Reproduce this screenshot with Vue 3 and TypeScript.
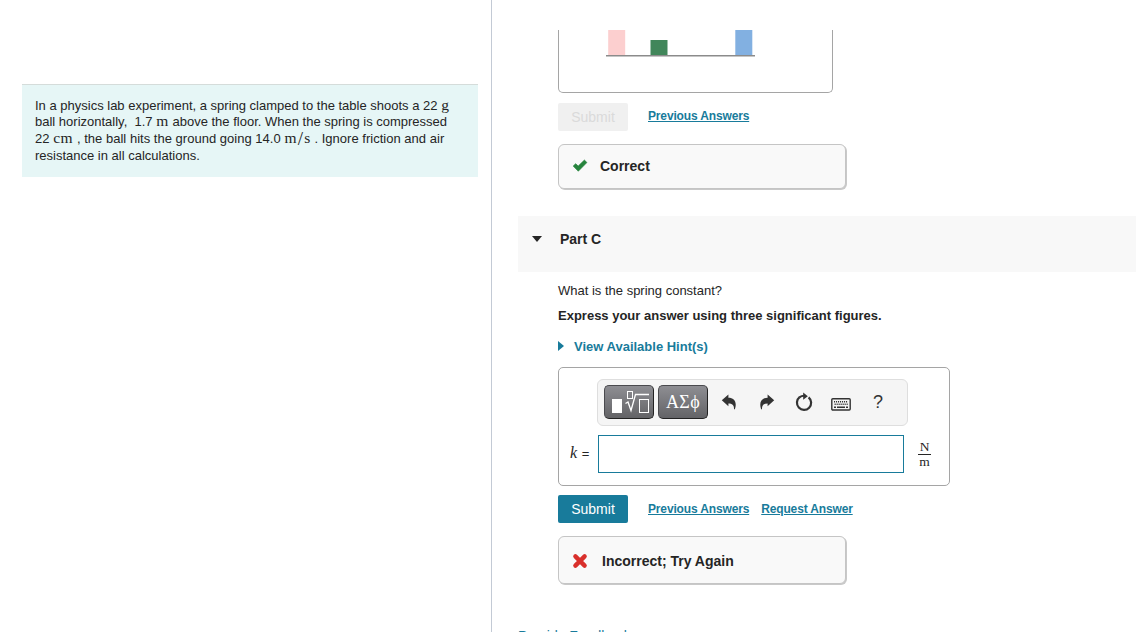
<script setup lang="ts">
import { ref } from 'vue'

const answer = ref('')
const partOpen = ref(true)

// Energy bars, only the lower part is visible in the scrolled panel
const bars = [
  { x: 49.2, height: 26, color: '#fccfcf' },
  { x: 91.5, height: 16, color: '#41865a' },
  { x: 176.3, height: 26, color: '#82b0e1' },
]

// Keys of the on-screen keyboard icon
const keys = [4, 6, 8, 10, 12, 14, 16]

function resetAnswer() {
  answer.value = ''
}
</script>

<template>
  <div class="page">
    <aside class="left">
      <div class="problem">
        <span class="line l1">In a physics lab experiment, a spring clamped to the table shoots a 22 <span class="unit">g</span></span>
        <span class="line l2">ball horizontally, &nbsp;1.7 <span class="unit">m</span> above the floor. When the spring is compressed</span>
        <span class="line l3">22 <span class="unit">cm</span> , the ball hits the ground going 14.0 <span class="unit">m<span class="slash">/</span>s</span> . Ignore friction and air</span>
        <span class="line l4">resistance in all calculations.</span>
      </div>
    </aside>

    <main class="right">
      <div class="chart">
        <svg width="273" height="62" viewBox="0 0 273 62">
          <rect v-for="bar in bars" :key="bar.x" :x="bar.x" :y="26 - bar.height" width="17" :height="bar.height" :fill="bar.color" />
          <rect x="47" y="25" width="149" height="1.5" fill="#8b8b8b" />
        </svg>
      </div>

      <div class="actions first">
        <button class="submit" disabled>Submit</button>
        <a class="link">Previous Answers</a>
      </div>

      <div class="feedback correct">
        <svg class="mark" width="16" height="14" viewBox="0 0 16 14">
          <path d="M1.2 7.1 3.7 4.7 6.2 7.1 12.4 1.1 14.9 3.5 6.3 12.2Z" fill="#26843d" stroke="#26843d" stroke-width=".7" stroke-linejoin="round" />
        </svg>
        <span>Correct</span>
      </div>

      <div class="part" @click="partOpen = !partOpen">
        <span class="caret"></span>
        <span>Part C</span>
      </div>

      <section v-if="partOpen" class="body">
        <p class="question">What is the spring constant?</p>
        <p class="instruction">Express your answer using three significant figures.</p>
        <div class="hints"><span class="arrow"></span><span>View Available Hint(s)</span></div>

        <div class="answer-box">
          <div class="toolbar">
            <button class="dark" aria-label="Templates">
              <svg width="38" height="24" viewBox="0 0 38 24">
                <rect x="1" y="9" width="10" height="14" fill="#fff" />
                <rect x="16.5" y="1.5" width="5" height="7" fill="none" stroke="#fff" />
                <path d="M14.5 13.5 17 12 20 20.5 24.5 4.5H38" fill="none" stroke="#fff" stroke-width="1.3" />
                <rect x="28.5" y="9.5" width="9" height="13" fill="none" stroke="#fff" />
              </svg>
            </button>
            <button class="dark greek">ΑΣϕ</button>
            <button class="tool undo" aria-label="Undo">
              <svg width="16" height="17" viewBox="0 0 16 17">
                <path d="M.8 6.3 7.4 .5V3.8C13 3.8 16.4 8 13.9 15.2H13C13.2 11.2 11.4 9.5 7.4 9.5V12.2Z" fill="#333" />
              </svg>
            </button>
            <button class="tool redo" aria-label="Redo">
              <svg width="16" height="17" viewBox="0 0 16 17">
                <path d="M15.2 6.3 8.6 .5V3.8C3 3.8 -.4 8 2.1 15.2H3C2.8 11.2 4.6 9.5 8.6 9.5V12.2Z" fill="#333" />
              </svg>
            </button>
            <button class="tool reset" aria-label="Reset" @click="resetAnswer">
              <svg width="18" height="20" viewBox="0 0 18 20">
                <path d="M4.6 5.2A7.1 7.1 0 1 0 13.6 5.3" fill="none" stroke="#333" stroke-width="2.2" />
                <path d="M4.4 5.4Q6.6 3.8 9 3.8" fill="none" stroke="#333" stroke-width="2" />
                <path d="M8.2.5 12.8 4.2 8.2 7.7Z" fill="#333" />
              </svg>
            </button>
            <button class="tool keyboard" aria-label="Keyboard">
              <svg width="20" height="13" viewBox="0 0 20 13">
                <rect x=".8" y=".8" width="18.4" height="11.2" rx="1" fill="#f5f5f5" stroke="#333" stroke-width="1.4" />
                <g fill="#333">
                  <rect v-for="k in keys" :key="'a' + k" :x="k - 1" y="3" width="1.1" height="1.5" />
                  <rect v-for="k in keys" :key="'b' + k" :x="k - .4" y="5.5" width="1.1" height="1.5" />
                  <rect x="3" y="8.5" width="2" height="1.5" />
                  <rect x="6" y="8.5" width="8" height="1.5" />
                  <rect x="15" y="8.5" width="2" height="1.5" />
                </g>
              </svg>
            </button>
            <button class="tool help">?</button>
          </div>
          <div class="entry">
            <label for="answer"><i>k</i> =</label>
            <input id="answer" v-model="answer" type="text">
            <span class="fraction"><span>N</span><span class="den">m</span></span>
          </div>
        </div>

        <div class="actions second">
          <button class="submit active">Submit</button>
          <a class="link">Previous Answers</a>
          <a class="link">Request Answer</a>
        </div>

        <div class="feedback incorrect">
          <svg class="mark" width="16" height="16" viewBox="0 0 16 16">
            <path d="M3.4 3.4 12.6 12.6M12.6 3.4 3.4 12.6" stroke="#d9302c" stroke-width="4.4" stroke-linecap="round" />
          </svg>
          <span>Incorrect; Try Again</span>
        </div>
      </section>

      <a class="provide">Provide Feedback</a>
    </main>
  </div>
</template>

<style>
body {
  background: #fff;
  overflow: hidden;
}
</style>

<style scoped>
.page {
  display: flex;
  width: 1136px;
  height: 632px;
  overflow: hidden;
  font-family: "Liberation Sans", Arial, sans-serif;
  font-size: 13px;
  color: #252525;
}

button {
  font-family: inherit;
  padding: 0;
  border: 0;
}

p {
  margin: 0;
}

.left {
  box-sizing: border-box;
  width: 492px;
  flex: none;
  padding: 84px 13px 0 22px;
  border-right: 1px solid #c3cad5;
}

.problem {
  box-sizing: border-box;
  height: 93px;
  padding: 12px 0 0 13px;
  background: #e6f6f6;
  border-top: 1px solid #d5dcda;
}

.line {
  display: block;
  height: 17px;
  line-height: 17px;
  white-space: nowrap;
}

.l1 {
  height: 16px;
}

.l3 {
  letter-spacing: .02px;
}

.unit {
  font-family: "Liberation Serif", serif;
  font-size: 15.5px;
  line-height: 1px;
  letter-spacing: .6px;
}

.slash {
  margin: 0 .6px;
  font-size: 19px;
  line-height: 1px;
  vertical-align: -2px;
}

.right {
  flex: 1;
  padding: 30px 0 0 26px;
  white-space: nowrap;
}

.chart {
  width: 273px;
  height: 62px;
  margin-left: 40px;
  border: 1px solid #a5a5a5;
  border-top: 0;
  border-radius: 0 0 5px 5px;
}

.chart svg {
  display: block;
}

.actions {
  display: flex;
  align-items: center;
  height: 28px;
}

.first {
  margin: 10px 0 0 40px;
}

.first .link {
  margin-top: -2px;
}

.submit {
  width: 70px;
  height: 28px;
  margin-right: 20px;
  border-radius: 2px;
  background: #f0f0f0;
  color: #dadada;
  font-size: 14px;
}

.active {
  background: #187b9b;
  color: #fff;
}

.link {
  margin-right: 12px;
  color: #187b9b;
  font-size: 12px;
  font-weight: bold;
  letter-spacing: -.15px;
  text-decoration: underline;
}

.feedback {
  box-sizing: border-box;
  display: flex;
  align-items: center;
  width: 288px;
  border: 1px solid #c5c5c5;
  border-radius: 6px;
  box-shadow: 1px 1px 0 #c9c9c9;
  background: #f9f9f9;
  font-size: 14px;
  font-weight: bold;
}

.correct {
  height: 45px;
  margin: 13px 0 1px 40px;
  padding: 0 0 1px 13px;
}

.correct .mark {
  margin-right: 12px;
}

.part {
  box-sizing: border-box;
  display: flex;
  align-items: center;
  height: 56px;
  margin-top: 27px;
  padding: 0 0 11px 14px;
  background: #f8f8f8;
  font-size: 14px;
  font-weight: bold;
}

.caret {
  margin-right: 17px;
  border: 5.5px solid transparent;
  border-top: 6px solid #252525;
  border-bottom: 0;
}

.caret + span {
  margin-left: 1px;
}

.body {
  padding-left: 40px;
}

.question {
  padding-top: 10px;
  line-height: 17px;
}

.instruction {
  padding-top: 8px;
  font-weight: bold;
  line-height: 17px;
}

.hints {
  display: flex;
  align-items: center;
  height: 17px;
  margin-top: 14px;
  color: #187b9b;
  font-weight: bold;
}

.arrow {
  margin: -2px 10px 0 0;
  border: 5.5px solid transparent;
  border-left: 6px solid #187b9b;
  border-right: 0;
}

.answer-box {
  box-sizing: border-box;
  width: 392px;
  height: 119px;
  margin-top: 12px;
  border: 1px solid #a5a5a5;
  border-radius: 5px;
}

.toolbar {
  box-sizing: border-box;
  display: flex;
  align-items: center;
  width: 311px;
  height: 47px;
  margin: 11px 0 0 38px;
  padding: 0 6px 1px;
  border: 1px solid #dedede;
  border-radius: 6px;
  background: #f5f5f5;
}

.dark {
  box-sizing: border-box;
  display: flex;
  align-items: center;
  justify-content: center;
  width: 50px;
  height: 34px;
  margin-right: 4px;
  border: 1px solid #4a4a4e;
  border-right-color: #222;
  border-bottom-color: #222;
  border-radius: 5px;
  background: linear-gradient(#8e8e93, #636366);
  color: #fff;
}

.dark svg {
  margin: 0 0 0 1px;
}

.greek {
  font-family: "Liberation Serif", serif;
  font-size: 18px;
  letter-spacing: .4px;
}

.tool {
  display: flex;
  align-items: center;
  justify-content: center;
  background: transparent;
}

.undo {
  margin-left: 9px;
}

.redo {
  margin-left: 22px;
}

.reset {
  margin: -1px 0 0 20px;
}

.keyboard {
  margin: 4px 0 0 18px;
}

.help {
  margin-left: 22px;
  color: #333;
  font-size: 18px;
}

.entry {
  display: flex;
  align-items: center;
  height: 38px;
  margin: 9px 0 0 11px;
}

label {
  width: 28px;
  font-size: 13px;
  line-height: 18px;
  white-space: nowrap;
}

label i {
  margin-right: 1px;
  font-family: "Liberation Serif", serif;
  font-size: 16px;
  line-height: 1px;
}

input {
  box-sizing: border-box;
  width: 306px;
  height: 38px;
  border: 1px solid #187b9b;
  border-radius: 0;
  outline: 0;
}

.fraction {
  width: 13px;
  margin-left: 14px;
  font-family: "Liberation Serif", serif;
  font-size: 13.5px;
  line-height: 15px;
  text-align: center;
}

.fraction span {
  display: block;
}

.fraction .den {
  border-top: 1px solid #252525;
  line-height: 14px;
}

.second {
  margin-top: 9px;
}

.incorrect {
  height: 48px;
  margin-top: 13px;
  padding: 1px 0 0 13px;
}

.incorrect .mark {
  margin-right: 14px;
}

.provide {
  display: block;
  margin-top: 44px;
  color: #187b9b;
  font-size: 14px;
  line-height: 17px;
}
</style>
